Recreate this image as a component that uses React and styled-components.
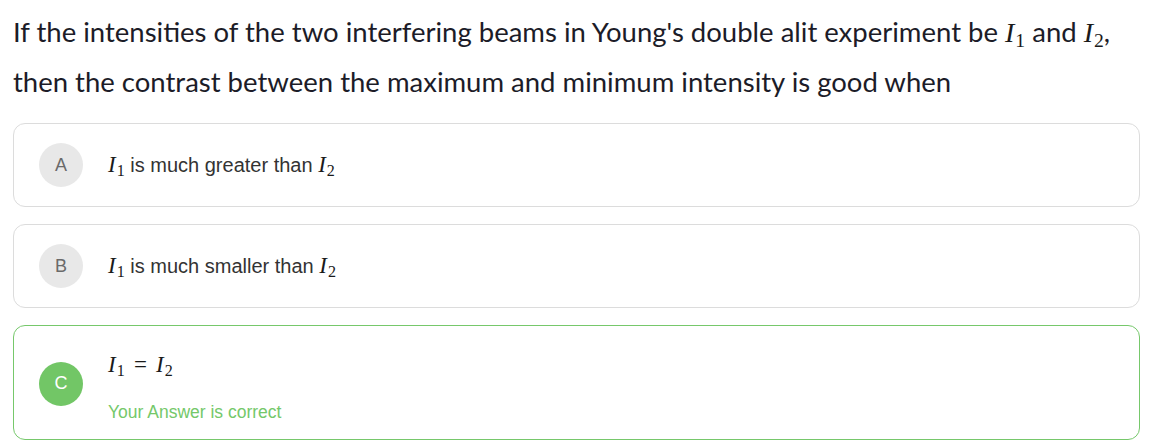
import React from 'react';
import styled, { createGlobalStyle } from 'styled-components';

const GlobalStyle = createGlobalStyle`
  body {
    margin: 0;
    background: #ffffff;
  }
`;

const Page = styled.div`
  padding: 7px 29px 0 13px;
`;

const Question = styled.div`
  font-family: Lato, "Noto Sans", sans-serif;
  font-size: 27.5px;
  line-height: 50px;
  color: #1c1c28;
  margin-bottom: 16px;
`;

const Options = styled.div`
  display: flex;
  flex-direction: column;
  gap: 17px;
`;

const Card = styled.div`
  display: flex;
  align-items: center;
  gap: 25px;
  padding: ${p => (p.$correct ? '19px 25px 17px' : '19px 25px')};
  border: 1px solid ${p => (p.$correct ? '#76c86b' : '#dcdcdc')};
  border-radius: 12px;
  background: #fff;
`;

const Badge = styled.div`
  flex: none;
  width: 44px;
  height: 44px;
  border-radius: 50%;
  display: flex;
  align-items: center;
  justify-content: center;
  background: ${p => (p.$correct ? '#72c666' : '#e8e8e8')};
  color: ${p => (p.$correct ? '#ffffff' : '#6a6a6a')};
  font-family: "Liberation Sans", Arial, sans-serif;
  font-size: 18px;
`;

const Body = styled.div`
  display: flex;
  flex-direction: column;
`;

const Text = styled.div`
  font-family: "Liberation Sans", Arial, sans-serif;
  font-size: 20px;
  line-height: ${p => (p.$tall ? '40px' : '24px')};
  color: #333333;
`;

const Feedback = styled.div`
  margin-top: 17px;
  font-family: "Liberation Sans", Arial, sans-serif;
  font-size: 17.5px;
  line-height: 20px;
  color: #74c86a;
`;

const Var = styled.span`
  font-family: "Liberation Serif", "Times New Roman", serif;
  font-style: italic;
  font-size: ${p => p.$size || '1.15em'};
  line-height: 1;
  color: #1a1a1a;
  white-space: nowrap;
`;

const Sub = styled.span`
  font-style: normal;
  font-size: 0.7em;
  position: relative;
  top: 0.25em;
  line-height: 0;
  margin-left: 1px;
`;

const Eq = styled.span`
  font-family: "Liberation Serif", "Times New Roman", serif;
  font-size: 1.15em;
  line-height: 1;
  color: #1a1a1a;
  margin: 0 0.4em;
`;

const I = ({ n, size }) => (
  <Var $size={size}>
    I<Sub>{n}</Sub>
  </Var>
);

const options = [
  { key: 'A', content: <><I n={1} /> is much greater than <I n={2} /></> },
  { key: 'B', content: <><I n={1} /> is much smaller than <I n={2} /></> },
  { key: 'C', content: <><I n={1} /><Eq>=</Eq><I n={2} /></>, correct: true },
];

export default function App() {
  return (
    <Page>
      <GlobalStyle />
      <Question>
        If the intensities of the two interfering beams in Young's double alit experiment be <I n={1} size="1.02em" /> and <I n={2} size="1.02em" />,
        then the contrast between the maximum and minimum intensity is good when
      </Question>
      <Options>
        {options.map(o => (
          <Card key={o.key} $correct={o.correct}>
            <Badge $correct={o.correct}>{o.key}</Badge>
            <Body>
              <Text $tall={o.correct}>{o.content}</Text>
              {o.correct && <Feedback>Your Answer is correct</Feedback>}
            </Body>
          </Card>
        ))}
      </Options>
    </Page>
  );
}
